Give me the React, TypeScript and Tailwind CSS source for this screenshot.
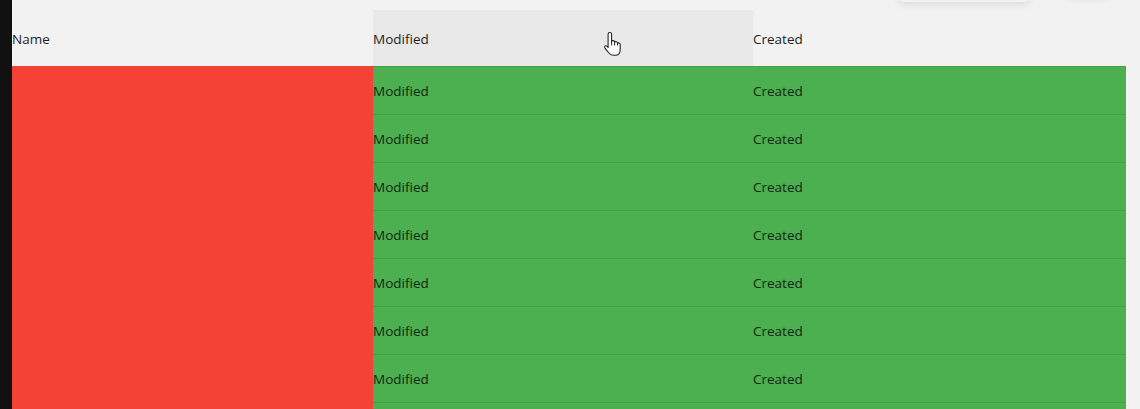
import React from "react";

const rows = Array.from({ length: 8 });

function HandCursor() {
  return (
    <svg width="19" height="26" viewBox="0 0 19 26" className="absolute left-[603px] top-[31px]">
      <path
        d="M6.8 1.5 C7.8 1.5 8.6 2.2 8.6 3.2 V10.2 C8.9 9.4 11.4 9.3 11.6 10.6 V11.2 C12 10.4 14.3 10.4 14.5 11.8 V12.4 C14.9 11.6 17.2 11.8 17.2 13.3 V18.5 C17.2 21.8 15.4 24.3 12.2 24.3 H10 C8 24.3 6.9 23.4 5.5 21.5 L1.8 16.8 C1 15.7 2.3 14 3.8 15.1 L5.1 16.4 V3.2 C5.1 2.2 5.8 1.5 6.8 1.5 Z"
        fill="white"
        stroke="#222"
        strokeWidth="1.1"
        strokeLinejoin="round"
      />
      <path d="M8.6 10.2 V14.5 M11.6 11.2 V14.5 M14.5 12.4 V14.5" stroke="#222" strokeWidth="1" fill="none" />
    </svg>
  );
}

export default function App() {
  return (
    <div
      className="relative flex h-[409px] w-[1140px] overflow-hidden bg-[#f2f2f2] text-[13.5px]"
      style={{ fontFamily: '"Open Sans", "Noto Sans", sans-serif' }}
    >
      <div className="absolute left-[898px] top-[-34px] h-[36px] w-[132px] rounded-md bg-[#f2f2f2] shadow-[0_2px_8px_rgba(0,0,0,0.10)]" />
      <div className="absolute left-[1068px] top-[-36px] h-[36px] w-[40px] rounded-md bg-[#f2f2f2] shadow-[0_1px_6px_rgba(0,0,0,0.05)]" />
      <div className="w-[12px] shrink-0 bg-[#111111]" />
      <div className="flex min-h-0 flex-col pt-[10px]">
        <div className="flex h-[56px] shrink-0 pt-[3px] text-[#1f1f1f]">
          <div className="flex w-[361px] items-center">Name</div>
          <div className="-mt-[3px] flex w-[380px] items-center bg-[#e8e8e8] pt-[3px]">Modified</div>
          <div className="flex w-[373px] items-center">Created</div>
        </div>
        <div className="flex min-h-0 flex-1 overflow-hidden">
          <div className="w-[361px] bg-[#f44336]" />
          <div className="flex w-[753px] flex-col">
            {rows.map((_, i) => (
              <div
                key={i}
                className="flex h-[48px] shrink-0 border-t border-[#43a047] bg-[#4caf50] pt-[2px] text-[#122812]"
              >
                {i < 7 && (
                  <>
                    <div className="flex w-[380px] items-center">Modified</div>
                    <div className="flex items-center">Created</div>
                  </>
                )}
              </div>
            ))}
          </div>
        </div>
      </div>
      <HandCursor />
    </div>
  );
}
